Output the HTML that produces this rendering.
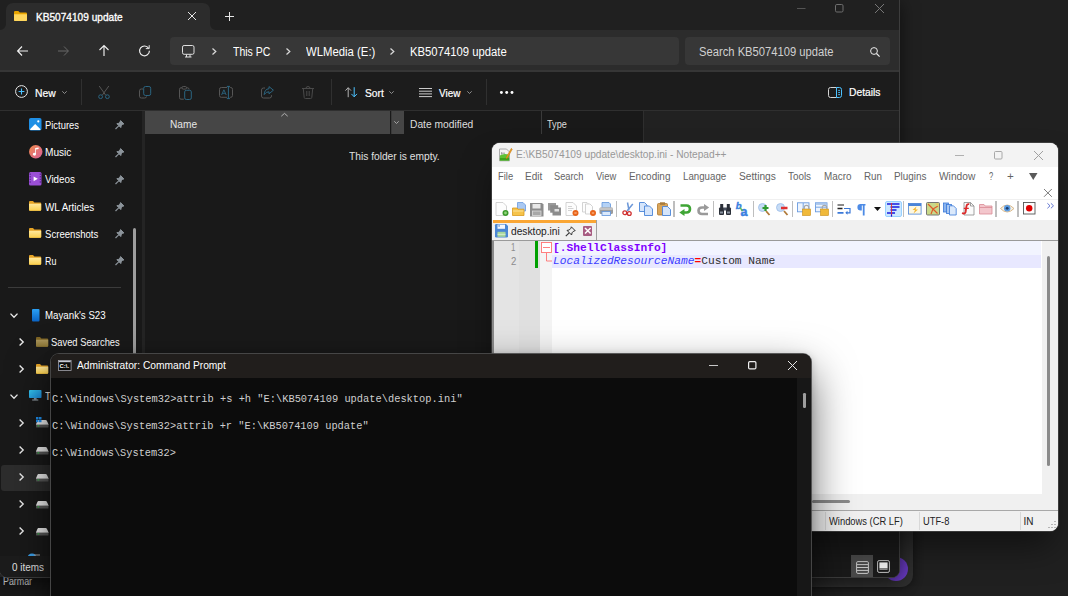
<!DOCTYPE html>
<html lang="en"><head><meta charset="utf-8"><title>KB5074109 update</title>
<style>
*{box-sizing:border-box;margin:0;padding:0}
html,body{width:1068px;height:596px;overflow:hidden;background:#202020}
body{position:relative;font-family:"Liberation Sans",sans-serif}
.a{position:absolute}
.t{position:absolute;white-space:pre;transform-origin:0 50%;display:block}
svg{position:absolute;overflow:visible}
</style></head><body>
<div class="a" style="left:0px;top:0px;width:1068px;height:596px;background:#202020;"></div>
<div class="a" style="left:-20px;top:400px;width:933px;height:186.5px;background:#2f2f2f;border-radius:0 0 12px 12px;box-shadow:0 0 10px rgba(0,0,0,.5)"></div>
<div class="a" style="left:883.5px;top:556.5px;width:24px;height:24px;background:#6a3bc4;border-radius:12px"></div>
<div class="a" style="left:0px;top:577px;width:52px;height:20px;background:#191919;"></div>
<span class="t" id="t0" style="left:3px;top:573px;font-size:11px;color:#e2e2e2;font-family:'Liberation Sans', sans-serif;line-height:16px;transform:scaleX(0.8056);">Parmar</span>
<div class="a" style="left:-1px;top:-1px;width:901px;height:578.5px;background:#191919;border:1px solid #3d3d3d;border-radius:0 0 8px 8px;overflow:hidden;box-shadow:0 4px 18px rgba(0,0,0,.55)">
<div class="a" style="left:0px;top:0px;width:900px;height:30px;background:#202020;"></div>
<div class="a" style="left:0px;top:30px;width:900px;height:40px;background:#2c2c2c;"></div>
<div class="a" style="left:0px;top:70px;width:900px;height:1.5px;background:#363636;"></div>
<div class="a" style="left:0px;top:71.5px;width:900px;height:38.5px;background:#1c1c1c;"></div>
<div class="a" style="left:0px;top:110px;width:900px;height:1px;background:#2f2f2f;"></div>
<div class="a" style="left:6px;top:3px;width:203.5px;height:28px;background:#2c2c2c;border-radius:7px 7px 0 0"></div>
<svg style="left:0px;top:24px" width="6" height="6" viewBox="0 0 6 6"><path d="M0 6 H6 V0 A6 6 0 0 1 0 6Z" fill="#2c2c2c"/></svg>
<svg style="left:209.5px;top:24px" width="6" height="6" viewBox="0 0 6 6"><path d="M0 0 A6 6 0 0 0 6 6 H0Z" fill="#2c2c2c"/></svg>
<svg style="left:14px;top:11px" width="13" height="10" viewBox="0 0 13 10"><path d="M0 1.2 Q0 0 1.2 0 H4.3 L5.8 1.5 H11.8 Q13 1.5 13 2.7 V9 Q13 10 12 10 H1 Q0 10 0 9Z" fill="#e8a400"/><path d="M0 3.2 H13 V9 Q13 10 12 10 H1 Q0 10 0 9Z" fill="#ffd75e"/></svg>
<span class="t" id="t1" style="left:36.3px;top:8.5px;font-size:10.5px;color:#fff;font-family:'Liberation Sans', sans-serif;line-height:16px;transform:scaleX(0.9633);-webkit-text-stroke:.32px;">KB5074109 update</span>
<svg style="left:187.5px;top:12px" width="8" height="8" viewBox="0 0 8 8"><path d="M0 0 L8 8 M8 0 L0 8" stroke="#e6e6e6" stroke-width="1" fill="none"/></svg>
<svg style="left:224.5px;top:11.5px" width="9" height="9" viewBox="0 0 9 9"><path d="M4.5 0 V9 M0 4.5 H9" stroke="#e6e6e6" stroke-width="1" fill="none"/></svg>
<svg style="left:796.5px;top:8px" width="8.5" height="1" viewBox="0 0 8.5 1"><path d="M0 .5 H8.5" stroke="#545454" stroke-width="1"/></svg>
<svg style="left:835px;top:4px" width="8.5" height="8.5" viewBox="0 0 8.5 8.5"><rect x=".5" y=".5" width="7.5" height="7.5" rx="1.3" stroke="#6f6f6f" fill="none"/></svg>
<svg style="left:875px;top:4px" width="9" height="9" viewBox="0 0 9 9"><path d="M0 0 L9 9 M9 0 L0 9" stroke="#777" stroke-width="1" fill="none"/></svg>
<svg style="left:17px;top:45.5px" width="11" height="10" viewBox="0 0 11 10"><path d="M11 5 H.8 M5 .5 L.6 5 L5 9.5" stroke="#f0f0f0" stroke-width="1.15" fill="none"/></svg>
<svg style="left:58px;top:45.5px" width="11" height="10" viewBox="0 0 11 10"><path d="M0 5 H10.2 M6 .5 L10.4 5 L6 9.5" stroke="#686868" stroke-width="1" fill="none"/></svg>
<svg style="left:98.5px;top:45px" width="10" height="11" viewBox="0 0 10 11"><path d="M5 11 V.8 M.5 5 L5 .6 L9.5 5" stroke="#f0f0f0" stroke-width="1.15" fill="none"/></svg>
<svg style="left:139px;top:45px" width="11" height="11" viewBox="0 0 11 11"><path d="M9.6 3.2 A4.9 4.9 0 1 0 10.4 5.8" stroke="#f0f0f0" stroke-width="1.15" fill="none"/><path d="M10.2 .2 V3.6 H6.8" stroke="#e4e4e4" stroke-width="1" fill="none"/></svg>
<div class="a" style="left:170px;top:37px;width:508.5px;height:28px;background:#373737;border-radius:4px"></div>
<svg style="left:182px;top:44.5px" width="12.5" height="12.5" viewBox="0 0 12.5 12.5"><rect x=".5" y=".5" width="11.5" height="8.8" rx="1.6" stroke="#e0e0e0" fill="none"/><path d="M3 12 H9.5 M4.5 9.5 V12 M8 9.5 V12" stroke="#e0e0e0" stroke-width="1" fill="none"/></svg>
<svg style="left:211.5px;top:48px" width="4.5" height="7" viewBox="0 0 4.5 7"><path d="M.5 .5 L3.8 3.5 L.5 6.5" stroke="#d8d8d8" stroke-width="1.25" fill="none"/></svg>
<svg style="left:286px;top:48px" width="4.5" height="7" viewBox="0 0 4.5 7"><path d="M.5 .5 L3.8 3.5 L.5 6.5" stroke="#d8d8d8" stroke-width="1.25" fill="none"/></svg>
<svg style="left:390px;top:48px" width="4.5" height="7" viewBox="0 0 4.5 7"><path d="M.5 .5 L3.8 3.5 L.5 6.5" stroke="#d8d8d8" stroke-width="1.25" fill="none"/></svg>
<span class="t" id="t2" style="left:233.3px;top:43.6px;font-size:12px;color:#fff;font-family:'Liberation Sans', sans-serif;line-height:16px;transform:scaleX(0.8767);">This PC</span>
<span class="t" id="t3" style="left:306px;top:43.6px;font-size:12px;color:#fff;font-family:'Liberation Sans', sans-serif;line-height:16px;transform:scaleX(0.9452);">WLMedia (E:)</span>
<span class="t" id="t4" style="left:410px;top:43.6px;font-size:12px;color:#fff;font-family:'Liberation Sans', sans-serif;line-height:16px;transform:scaleX(0.9417);">KB5074109 update</span>
<div class="a" style="left:685px;top:37px;width:205px;height:28px;background:#373737;border-radius:4px"></div>
<span class="t" id="t5" style="left:698.5px;top:43.6px;font-size:12px;color:#d0d0d0;font-family:'Liberation Sans', sans-serif;line-height:16px;transform:scaleX(0.9340);">Search KB5074109 update</span>
<svg style="left:869.5px;top:46.5px" width="10" height="10" viewBox="0 0 10 10"><circle cx="4" cy="4" r="3.4" stroke="#ececec" stroke-width="1" fill="none"/><path d="M6.5 6.5 L9.6 9.6" stroke="#ececec" stroke-width="1.15"/></svg>
<svg style="left:14.5px;top:85px" width="13" height="13" viewBox="0 0 13 13"><circle cx="6.5" cy="6.5" r="5.9" stroke="#e8e8e8" stroke-width="1" fill="none"/><path d="M6.5 3.6 V9.4 M3.6 6.5 H9.4" stroke="#4cc2ff" stroke-width="1.1"/></svg>
<span class="t" id="t6" style="left:35.3px;top:84.5px;font-size:10.5px;color:#fff;font-family:'Liberation Sans', sans-serif;line-height:16px;transform:scaleX(0.9857);-webkit-text-stroke:.2px;">New</span>
<svg style="left:61.5px;top:91px" width="5" height="3" viewBox="0 0 5 3"><path d="M.3 .3 L2.5 2.5 L4.7 .3" stroke="#9a9a9a" stroke-width=".9" fill="none"/></svg>
<div class="a" style="left:81px;top:79px;width:1px;height:26px;background:#303030;"></div>
<svg style="left:97.5px;top:86px" width="12" height="13" viewBox="0 0 12 13"><path d="M1.2 0 L7.6 9 M10.8 0 L4.4 9" stroke="#565656" stroke-width="1" fill="none"/><circle cx="2.6" cy="10.7" r="1.9" stroke="#2b6581" fill="none"/><circle cx="9.4" cy="10.7" r="1.9" stroke="#2b6581" fill="none"/></svg>
<svg style="left:138.5px;top:86px" width="12.5" height="12.5" viewBox="0 0 12.5 12.5"><path d="M4 3 H2.3 Q.5 3 .5 4.8 V10.2 Q.5 12 2.3 12 H5.7 Q7.5 12 7.5 10.4" stroke="#565656" fill="none"/><rect x="4.7" y=".5" width="7" height="9" rx="1.8" stroke="#2b6581" fill="none"/></svg>
<svg style="left:179px;top:85.5px" width="13" height="14" viewBox="0 0 13 14"><path d="M3 1.8 H2 Q.5 1.8 .5 3.3 V11.7 Q.5 13.2 2 13.2 H4.8 M7.5 1.8 H8.5 Q10 1.8 10 3.3 V3.5" stroke="#565656" fill="none"/><rect x="3" y=".5" width="4.5" height="2.6" rx="1.2" stroke="#565656" fill="none"/><rect x="5.7" y="4.3" width="6.6" height="9.2" rx="1.6" stroke="#2b6581" fill="none"/></svg>
<svg style="left:219px;top:85.5px" width="14" height="13" viewBox="0 0 14 13"><path d="M8 1.5 H2.3 Q.5 1.5 .5 3.3 V9.5 Q.5 11.3 2.3 11.3 H8 M10.8 1.5 H11.7 Q13.5 1.5 13.5 3.3 V9.5 Q13.5 11.3 11.7 11.3 H10.8" stroke="#565656" fill="none"/><path d="M9.4 0 V13 M7.8 .4 H11 M7.8 12.6 H11" stroke="#2b6581" fill="none"/><path d="M2.6 9 L4.9 3.8 L7.2 9 M3.4 7.3 H6.4" stroke="#2b6581" stroke-width=".9" fill="none"/></svg>
<svg style="left:260.5px;top:85.5px" width="13" height="12.5" viewBox="0 0 13 12.5"><path d="M4 2 H2.5 Q.5 2 .5 4 V10 Q.5 12 2.5 12 H8.5 Q10.5 12 10.5 10 V9.2" stroke="#565656" fill="none"/><path d="M8 .6 L12.4 4.2 L8 7.8 V5.8 Q5 5.6 3.2 8.6 Q3.4 3.2 8 2.7Z" stroke="#2b6581" fill="none" stroke-linejoin="round"/></svg>
<svg style="left:302px;top:85.5px" width="12" height="13" viewBox="0 0 12 13"><path d="M0 2.5 H12 M4 2.3 Q4 .5 6 .5 Q8 .5 8 2.3 M1.3 2.8 L2.2 11.5 Q2.3 12.5 3.4 12.5 H8.6 Q9.7 12.5 9.8 11.5 L10.7 2.8 M4.8 5 V10 M7.2 5 V10" stroke="#4a4a4a" fill="none"/></svg>
<div class="a" style="left:330.5px;top:79px;width:1px;height:26px;background:#303030;"></div>
<svg style="left:344.5px;top:87px" width="13" height="10.4" viewBox="0 0 13 10.4"><path d="M3.2 10.2 V.8 M.4 3.6 L3.2 .7 L6 3.6" stroke="#b4b4b4" stroke-width="1" fill="none"/><path d="M9.2 .2 V9.8 M6.4 6.9 L9.2 9.8 L12 6.9" stroke="#4cc2ff" stroke-width="1" fill="none"/></svg>
<span class="t" id="t7" style="left:364.5px;top:84.5px;font-size:10.5px;color:#fff;font-family:'Liberation Sans', sans-serif;line-height:16px;transform:scaleX(0.9737);-webkit-text-stroke:.2px;">Sort</span>
<svg style="left:389px;top:91px" width="5" height="3" viewBox="0 0 5 3"><path d="M.3 .3 L2.5 2.5 L4.7 .3" stroke="#9a9a9a" stroke-width=".9" fill="none"/></svg>
<svg style="left:418.5px;top:87.5px" width="13" height="9" viewBox="0 0 13 9"><path d="M0 .5 H13 M0 3.2 H13 M0 5.9 H13 M0 8.6 H13" stroke="#e0e0e0" stroke-width=".9"/></svg>
<span class="t" id="t8" style="left:439.3px;top:84.5px;font-size:10.5px;color:#fff;font-family:'Liberation Sans', sans-serif;line-height:16px;transform:scaleX(0.9435);-webkit-text-stroke:.2px;">View</span>
<svg style="left:466.5px;top:91px" width="5" height="3" viewBox="0 0 5 3"><path d="M.3 .3 L2.5 2.5 L4.7 .3" stroke="#9a9a9a" stroke-width=".9" fill="none"/></svg>
<div class="a" style="left:486px;top:79px;width:1px;height:26px;background:#303030;"></div>
<svg style="left:500px;top:91.2px" width="13.5" height="3" viewBox="0 0 13.5 3"><circle cx="1.4" cy="1.5" r="1.45" fill="#fff"/><circle cx="6.7" cy="1.5" r="1.45" fill="#fff"/><circle cx="12" cy="1.5" r="1.45" fill="#fff"/></svg>
<svg style="left:828px;top:86.5px" width="14" height="11" viewBox="0 0 14 11"><path d="M8.5 .5 H2.5 Q.5 .5 .5 2.5 V8.5 Q.5 10.5 2.5 10.5 H8.5" stroke="#d4d4d4" fill="none"/><path d="M8.5 .5 H11.5 Q13.5 .5 13.5 2.5 V8.5 Q13.5 10.5 11.5 10.5 H8.5Z" stroke="#4cc2ff" fill="none"/><path d="M10.2 3.4 H12 M10.2 5.5 H12 M10.2 7.6 H12" stroke="#4cc2ff" stroke-width=".9"/></svg>
<span class="t" id="t9" style="left:848.6px;top:84.1px;font-size:10.5px;color:#fff;font-family:'Liberation Sans', sans-serif;line-height:16px;transform:scaleX(0.9812);-webkit-text-stroke:.2px;">Details</span>
<div class="a" style="left:142px;top:111px;width:2.6px;height:470px;background:#242424;"></div>
<div class="a" style="left:644px;top:111px;width:256px;height:470px;background:#212121;"></div>
<div class="a" style="left:643px;top:111px;width:1px;height:470px;background:#2e2e2e;"></div>
<div class="a" style="left:644px;top:500px;width:256px;height:80px;background:#1a1a1a;"></div>
<div class="a" style="left:144.8px;top:111px;width:245.7px;height:23.3px;background:#464646;"></div>
<div class="a" style="left:391px;top:111px;width:12.5px;height:23.3px;background:#464646;"></div>
<div class="a" style="left:390.5px;top:111px;width:0.6px;height:23.3px;background:#3a3a3a;"></div>
<svg style="left:393.7px;top:120.5px" width="5" height="3" viewBox="0 0 5 3"><path d="M.3 .3 L2.5 2.5 L4.7 .3" stroke="#b0b0b0" stroke-width=".9" fill="none"/></svg>
<svg style="left:280.5px;top:112.5px" width="7" height="3.5" viewBox="0 0 7 3.5"><path d="M.3 3.2 L3.5 .4 L6.7 3.2" stroke="#bdbdbd" stroke-width=".9" fill="none"/></svg>
<span class="t" id="t10" style="left:170px;top:115.5px;font-size:10.5px;color:#e6e6e6;font-family:'Liberation Sans', sans-serif;line-height:16px;transform:scaleX(0.9643);">Name</span>
<span class="t" id="t11" style="left:409.5px;top:115.5px;font-size:10.5px;color:#dedede;font-family:'Liberation Sans', sans-serif;line-height:16px;transform:scaleX(0.9769);">Date modified</span>
<div class="a" style="left:541px;top:111px;width:1px;height:23px;background:#3a3a3a;"></div>
<span class="t" id="t12" style="left:547px;top:115.5px;font-size:10.5px;color:#dedede;font-family:'Liberation Sans', sans-serif;line-height:16px;transform:scaleX(0.8696);">Type</span>
<span class="t" id="t13" style="left:348.5px;top:147.5px;font-size:10.5px;color:#e0e0e0;font-family:'Liberation Sans', sans-serif;line-height:16px;transform:scaleX(0.9731);">This folder is empty.</span>
<svg width="0" height="0" style="left:0;top:0"><defs><linearGradient id="fg" x1="0" y1="0" x2="0" y2="1"><stop offset="0" stop-color="#ffe89c"/><stop offset="1" stop-color="#fbd04e"/></linearGradient><linearGradient id="fgd" x1="0" y1="0" x2="0" y2="1"><stop offset="0" stop-color="#a8945a"/><stop offset="1" stop-color="#8a7434"/></linearGradient></defs></svg>
<svg style="left:29px;top:118.2px" width="12.5" height="12.5" viewBox="0 0 12.5 12.5"><rect width="12.5" height="12.5" rx="1.8" fill="#1f8fe5"/><path d="M1 11.3 L6.2 6 L11.5 11.3 Q11.5 12 10.8 12 H1.8 Q1 12 1 11.3Z" fill="#fff"/><circle cx="9.3" cy="3.4" r="1.1" fill="#fff"/></svg>
<span class="t" id="t14" style="left:45px;top:117.1px;font-size:10.5px;color:#fff;font-family:'Liberation Sans', sans-serif;line-height:16px;transform:scaleX(0.8947);">Pictures</span>
<svg style="left:115px;top:120.4px" width="9.5" height="9.5" viewBox="0 0 9.5 9.5"><path d="M5.6 .6 L8.9 3.9 L7.4 4.5 L6.2 5.7 L5.8 7.6 L1.9 3.7 L3.8 3.3 L5 2.1Z" fill="#8b939a" stroke="#8b939a" stroke-width="1" stroke-linejoin="round"/><path d="M3.7 5.8 L.5 9" stroke="#8b939a" stroke-width="1.2"/></svg>
<svg style="left:28.5px;top:145.2px" width="13.5" height="13.5" viewBox="0 0 13.5 13.5"><defs><linearGradient id="mg" x1="0" y1="0" x2="1" y2="1"><stop offset="0" stop-color="#f08a4b"/><stop offset="1" stop-color="#d8609a"/></linearGradient></defs><circle cx="6.75" cy="6.75" r="6.75" fill="url(#mg)"/><path d="M6.2 3 L9.6 2.4 V4 L7 4.5 V9.3 A1.6 1.4 0 1 1 6.2 8Z" fill="#fff"/></svg>
<span class="t" id="t15" style="left:45px;top:144.3px;font-size:10.5px;color:#fff;font-family:'Liberation Sans', sans-serif;line-height:16px;transform:scaleX(0.9630);">Music</span>
<svg style="left:115px;top:147.6px" width="9.5" height="9.5" viewBox="0 0 9.5 9.5"><path d="M5.6 .6 L8.9 3.9 L7.4 4.5 L6.2 5.7 L5.8 7.6 L1.9 3.7 L3.8 3.3 L5 2.1Z" fill="#8b939a" stroke="#8b939a" stroke-width="1" stroke-linejoin="round"/><path d="M3.7 5.8 L.5 9" stroke="#8b939a" stroke-width="1.2"/></svg>
<svg style="left:29px;top:172.2px" width="12.5" height="13.5" viewBox="0 0 12.5 13.5"><rect width="12.5" height="13.5" rx="1.5" fill="#9b4fd6"/><path d="M1.2 1.5 V12 M11.3 1.5 V12" stroke="#5d2a94" stroke-width="1.2" stroke-dasharray="1.4 1.2"/><path d="M4.6 4.4 L8.8 6.8 L4.6 9.2Z" fill="#fff"/></svg>
<span class="t" id="t16" style="left:45px;top:171.4px;font-size:10.5px;color:#fff;font-family:'Liberation Sans', sans-serif;line-height:16px;transform:scaleX(0.9375);">Videos</span>
<svg style="left:115px;top:174.7px" width="9.5" height="9.5" viewBox="0 0 9.5 9.5"><path d="M5.6 .6 L8.9 3.9 L7.4 4.5 L6.2 5.7 L5.8 7.6 L1.9 3.7 L3.8 3.3 L5 2.1Z" fill="#8b939a" stroke="#8b939a" stroke-width="1" stroke-linejoin="round"/><path d="M3.7 5.8 L.5 9" stroke="#8b939a" stroke-width="1.2"/></svg>
<svg style="left:29px;top:201px" width="12.2" height="9.7" viewBox="0 0 12.2 9.7"><path d="M0 1 Q0 0 1 0 H4 L5.4 1.4 H11.2 Q12.2 1.4 12.2 2.4 V8.7 Q12.2 9.7 11.2 9.7 H1 Q0 9.7 0 8.7Z" fill="#e6a324"/><path d="M0 2.8 H12.2 V8.7 Q12.2 9.7 11.2 9.7 H1 Q0 9.7 0 8.7Z" fill="url(#fg)"/></svg>
<span class="t" id="t17" style="left:45px;top:198.6px;font-size:10.5px;color:#fff;font-family:'Liberation Sans', sans-serif;line-height:16px;transform:scaleX(0.9423);">WL Articles</span>
<svg style="left:115px;top:201.9px" width="9.5" height="9.5" viewBox="0 0 9.5 9.5"><path d="M5.6 .6 L8.9 3.9 L7.4 4.5 L6.2 5.7 L5.8 7.6 L1.9 3.7 L3.8 3.3 L5 2.1Z" fill="#8b939a" stroke="#8b939a" stroke-width="1" stroke-linejoin="round"/><path d="M3.7 5.8 L.5 9" stroke="#8b939a" stroke-width="1.2"/></svg>
<svg style="left:29px;top:228.2px" width="12.2" height="9.7" viewBox="0 0 12.2 9.7"><path d="M0 1 Q0 0 1 0 H4 L5.4 1.4 H11.2 Q12.2 1.4 12.2 2.4 V8.7 Q12.2 9.7 11.2 9.7 H1 Q0 9.7 0 8.7Z" fill="#e6a324"/><path d="M0 2.8 H12.2 V8.7 Q12.2 9.7 11.2 9.7 H1 Q0 9.7 0 8.7Z" fill="url(#fg)"/></svg>
<span class="t" id="t18" style="left:45px;top:225.7px;font-size:10.5px;color:#fff;font-family:'Liberation Sans', sans-serif;line-height:16px;transform:scaleX(0.9138);">Screenshots</span>
<svg style="left:115px;top:229px" width="9.5" height="9.5" viewBox="0 0 9.5 9.5"><path d="M5.6 .6 L8.9 3.9 L7.4 4.5 L6.2 5.7 L5.8 7.6 L1.9 3.7 L3.8 3.3 L5 2.1Z" fill="#8b939a" stroke="#8b939a" stroke-width="1" stroke-linejoin="round"/><path d="M3.7 5.8 L.5 9" stroke="#8b939a" stroke-width="1.2"/></svg>
<svg style="left:29px;top:255.4px" width="12.2" height="9.7" viewBox="0 0 12.2 9.7"><path d="M0 1 Q0 0 1 0 H4 L5.4 1.4 H11.2 Q12.2 1.4 12.2 2.4 V8.7 Q12.2 9.7 11.2 9.7 H1 Q0 9.7 0 8.7Z" fill="#e6a324"/><path d="M0 2.8 H12.2 V8.7 Q12.2 9.7 11.2 9.7 H1 Q0 9.7 0 8.7Z" fill="url(#fg)"/></svg>
<span class="t" id="t19" style="left:45px;top:252.8px;font-size:10.5px;color:#fff;font-family:'Liberation Sans', sans-serif;line-height:16px;transform:scaleX(0.8462);">Ru</span>
<svg style="left:115px;top:256.1px" width="9.5" height="9.5" viewBox="0 0 9.5 9.5"><path d="M5.6 .6 L8.9 3.9 L7.4 4.5 L6.2 5.7 L5.8 7.6 L1.9 3.7 L3.8 3.3 L5 2.1Z" fill="#8b939a" stroke="#8b939a" stroke-width="1" stroke-linejoin="round"/><path d="M3.7 5.8 L.5 9" stroke="#8b939a" stroke-width="1.2"/></svg>
<div class="a" style="left:133px;top:228px;width:2.5px;height:130px;background:#9d9d9d;border-radius:1.5px"></div>
<div class="a" style="left:8px;top:287.3px;width:112.5px;height:1px;background:#3b3b3b;"></div>
<svg style="left:10px;top:313px" width="8" height="5" viewBox="0 0 8 5"><path d="M.5 .6 L4 4.2 L7.5 .6" stroke="#ececec" stroke-width="1.35" fill="none"/></svg>
<svg style="left:31.5px;top:308.5px" width="7.5" height="12.5" viewBox="0 0 7.5 12.5"><defs><linearGradient id="ph" x1="0" y1="0" x2="0" y2="1"><stop offset="0" stop-color="#2aa0f4"/><stop offset="1" stop-color="#0a63c4"/></linearGradient></defs><rect width="7.5" height="12.5" rx="1" fill="url(#ph)"/></svg>
<span class="t" id="t20" style="left:45px;top:307px;font-size:10.5px;color:#fff;font-family:'Liberation Sans', sans-serif;line-height:16px;transform:scaleX(0.9242);">Mayank's S23</span>
<svg style="left:18.5px;top:338px" width="5" height="8" viewBox="0 0 5 8"><path d="M.6 .5 L4.2 4 L.6 7.5" stroke="#ececec" stroke-width="1.35" fill="none"/></svg>
<svg style="left:35.5px;top:337px" width="12.2" height="9.7" viewBox="0 0 12.2 9.7"><path d="M0 1 Q0 0 1 0 H4 L5.4 1.4 H11.2 Q12.2 1.4 12.2 2.4 V8.7 Q12.2 9.7 11.2 9.7 H1 Q0 9.7 0 8.7Z" fill="#7e6424"/><path d="M0 2.8 H12.2 V8.7 Q12.2 9.7 11.2 9.7 H1 Q0 9.7 0 8.7Z" fill="url(#fgd)"/></svg>
<span class="t" id="t21" style="left:51.3px;top:334px;font-size:10.5px;color:#fff;font-family:'Liberation Sans', sans-serif;line-height:16px;transform:scaleX(0.8922);">Saved Searches</span>
<svg style="left:18.5px;top:365px" width="5" height="8" viewBox="0 0 5 8"><path d="M.6 .5 L4.2 4 L.6 7.5" stroke="#ececec" stroke-width="1.35" fill="none"/></svg>
<svg style="left:35.5px;top:364px" width="12.2" height="9.7" viewBox="0 0 12.2 9.7"><path d="M0 1 Q0 0 1 0 H4 L5.4 1.4 H11.2 Q12.2 1.4 12.2 2.4 V8.7 Q12.2 9.7 11.2 9.7 H1 Q0 9.7 0 8.7Z" fill="#e6a324"/><path d="M0 2.8 H12.2 V8.7 Q12.2 9.7 11.2 9.7 H1 Q0 9.7 0 8.7Z" fill="url(#fg)"/></svg>
<svg style="left:10px;top:394px" width="8" height="5" viewBox="0 0 8 5"><path d="M.5 .6 L4 4.2 L7.5 .6" stroke="#ececec" stroke-width="1.35" fill="none"/></svg>
<svg style="left:29px;top:390.3px" width="12.5" height="11" viewBox="0 0 12.5 11"><defs><linearGradient id="pc" x1="0" y1="0" x2="1" y2="1"><stop offset="0" stop-color="#35c8f0"/><stop offset="1" stop-color="#1a86d8"/></linearGradient></defs><rect x="0" y="0" width="12.5" height="8" rx=".8" fill="url(#pc)"/><path d="M4.9 8 H7.6 V9.6 H4.9Z" fill="#7e8e99"/><path d="M3.2 10 H9.3" stroke="#aab6be" stroke-width=".9"/></svg>
<span class="t" id="t22" style="left:45px;top:388px;font-size:10.5px;color:#fff;font-family:'Liberation Sans', sans-serif;line-height:16px;transform:scaleX(0.8919);">This PC</span>
<svg style="left:18.5px;top:419px" width="5" height="8" viewBox="0 0 5 8"><path d="M.6 .5 L4.2 4 L.6 7.5" stroke="#ececec" stroke-width="1.35" fill="none"/></svg>
<svg style="left:35.5px;top:419.8px" width="12.5" height="7.6" viewBox="0 0 12.5 7.6"><path d="M2.4 0 H9.6 Q10.6 0 11 .9 L12.5 4.2 H0 L1.4 .9 Q1.8 0 2.4 0Z" fill="#ececec"/><rect x="0" y="4" width="12.5" height="3.6" rx=".7" fill="#585858"/><rect x="0" y="4" width="12.5" height=".8" fill="#c4c4c4"/><rect x="1.5" y="5.4" width="1.7" height="1" fill="#27c93f"/><path d="M0 -3 H2.5 V-.6 H0Z M3 -3 H5.5 V-.6 H3Z M0 -.1 H2.5 V2.3 H0Z M3 -.1 H5.5 V2.3 H3Z" fill="#1e90f0"/></svg>
<svg style="left:18.5px;top:446px" width="5" height="8" viewBox="0 0 5 8"><path d="M.6 .5 L4.2 4 L.6 7.5" stroke="#ececec" stroke-width="1.35" fill="none"/></svg>
<svg style="left:35.5px;top:446.8px" width="12.5" height="7.6" viewBox="0 0 12.5 7.6"><path d="M2.4 0 H9.6 Q10.6 0 11 .9 L12.5 4.2 H0 L1.4 .9 Q1.8 0 2.4 0Z" fill="#ececec"/><rect x="0" y="4" width="12.5" height="3.6" rx=".7" fill="#585858"/><rect x="0" y="4" width="12.5" height=".8" fill="#c4c4c4"/><rect x="1.5" y="5.4" width="1.7" height="1" fill="#27c93f"/></svg>
<div class="a" style="left:1px;top:464.5px;width:141px;height:26px;background:#2d2d2d;border-radius:3px"></div>
<svg style="left:18.5px;top:473px" width="5" height="8" viewBox="0 0 5 8"><path d="M.6 .5 L4.2 4 L.6 7.5" stroke="#ececec" stroke-width="1.35" fill="none"/></svg>
<svg style="left:35.5px;top:473.8px" width="12.5" height="7.6" viewBox="0 0 12.5 7.6"><path d="M2.4 0 H9.6 Q10.6 0 11 .9 L12.5 4.2 H0 L1.4 .9 Q1.8 0 2.4 0Z" fill="#ececec"/><rect x="0" y="4" width="12.5" height="3.6" rx=".7" fill="#585858"/><rect x="0" y="4" width="12.5" height=".8" fill="#c4c4c4"/><rect x="1.5" y="5.4" width="1.7" height="1" fill="#27c93f"/></svg>
<svg style="left:18.5px;top:500px" width="5" height="8" viewBox="0 0 5 8"><path d="M.6 .5 L4.2 4 L.6 7.5" stroke="#ececec" stroke-width="1.35" fill="none"/></svg>
<svg style="left:35.5px;top:500.8px" width="12.5" height="7.6" viewBox="0 0 12.5 7.6"><path d="M2.4 0 H9.6 Q10.6 0 11 .9 L12.5 4.2 H0 L1.4 .9 Q1.8 0 2.4 0Z" fill="#ececec"/><rect x="0" y="4" width="12.5" height="3.6" rx=".7" fill="#585858"/><rect x="0" y="4" width="12.5" height=".8" fill="#c4c4c4"/><rect x="1.5" y="5.4" width="1.7" height="1" fill="#27c93f"/></svg>
<svg style="left:18.5px;top:527px" width="5" height="8" viewBox="0 0 5 8"><path d="M.6 .5 L4.2 4 L.6 7.5" stroke="#ececec" stroke-width="1.35" fill="none"/></svg>
<svg style="left:35.5px;top:527.8px" width="12.5" height="7.6" viewBox="0 0 12.5 7.6"><path d="M2.4 0 H9.6 Q10.6 0 11 .9 L12.5 4.2 H0 L1.4 .9 Q1.8 0 2.4 0Z" fill="#ececec"/><rect x="0" y="4" width="12.5" height="3.6" rx=".7" fill="#585858"/><rect x="0" y="4" width="12.5" height=".8" fill="#c4c4c4"/><rect x="1.5" y="5.4" width="1.7" height="1" fill="#27c93f"/></svg>
<svg style="left:27px;top:553px" width="12" height="6" viewBox="0 0 12 6"><circle cx="5" cy="5" r="4.6" fill="#3a9ee8"/><path d="M7 2 H13" stroke="#aaa" stroke-width="1"/></svg>
<div class="a" style="left:11px;top:556px;width:2px;height:1.5px;background:#888;"></div>
<div class="a" style="left:0px;top:556px;width:51px;height:22px;background:#1c1c1c;"></div>
<span class="t" id="t23" style="left:12px;top:559px;font-size:10.5px;color:#e4e4e4;font-family:'Liberation Sans', sans-serif;line-height:16px;transform:scaleX(0.9412);">0 items</span>
<div class="a" style="left:851px;top:555px;width:22px;height:23px;background:#4b4b4b;"></div>
<svg style="left:856px;top:560.5px" width="13" height="13" viewBox="0 0 13 13"><rect x=".6" y=".6" width="11.8" height="11.8" rx="1.2" stroke="#cdcdcd" stroke-width="1" fill="none"/><path d="M1 3.6 H12 M1 6.5 H12 M1 9.4 H12" stroke="#cdcdcd" stroke-width="1"/></svg>
<svg style="left:877px;top:559.5px" width="13" height="13" viewBox="0 0 13 13"><rect x=".6" y=".6" width="11.8" height="11.8" rx="1.5" stroke="#c4c4c4" stroke-width="1" fill="none"/><rect x="2.4" y="2.4" width="8.2" height="6" fill="#f2f2f2"/><rect x="2.4" y="8.4" width="8.2" height="1.6" fill="#8a8a8a"/></svg>
</div>
<div class="a" style="left:492px;top:143px;width:566px;height:387.5px;background:#fff;border-radius:8px;overflow:hidden;box-shadow:0 0 0 1px rgba(90,90,90,.55),0 20px 34px -6px rgba(0,0,0,.5)">
<div class="a" style="left:0px;top:0px;width:566px;height:24.3px;background:#f3f3f3;"></div>
<svg style="left:6.5px;top:4.5px" width="13.5" height="13.5" viewBox="0 0 13.5 13.5"><path d="M.5 1 H7.5 L10.5 4 V12.8 H.5Z" fill="#f4f4f4" stroke="#9a9a9a" stroke-width=".8"/><path d="M.9 7.5 Q4 5 10.1 6.5 V12.4 H.9Z" fill="#5ec236"/><path d="M.9 10 H10.1 V12.4 H.9Z" fill="#3da31c"/><path d="M12.3 .3 L13.3 1.2 L8.3 10.2 L7 10.8 L7.2 9.3Z" fill="#f0a020" stroke="#b06a10" stroke-width=".4"/><path d="M2.5 6.5 V4.2 M3 5.2 H6" stroke="#777" stroke-width=".7"/></svg>
<span class="t" id="t24" style="left:24.3px;top:4px;font-size:10px;color:#989898;font-family:'Liberation Sans', sans-serif;line-height:16px;transform:scaleX(1.0179);">E:\KB5074109 update\desktop.ini - Notepad++</span>
<svg style="left:463px;top:12px" width="9" height="1" viewBox="0 0 9 1"><path d="M0 .5 H9" stroke="#b0b0b0"/></svg>
<svg style="left:502px;top:7.5px" width="8.5" height="8.5" viewBox="0 0 8.5 8.5"><rect x=".5" y=".5" width="7.5" height="7.5" rx="1" stroke="#a8a8a8" fill="none"/></svg>
<svg style="left:541.5px;top:7.5px" width="9" height="9" viewBox="0 0 9 9"><path d="M0 0 L9 9 M9 0 L0 9" stroke="#a0a0a0" stroke-width="1" fill="none"/></svg>
<span class="t" id="t25" style="left:6px;top:25.6px;font-size:10px;color:#646464;font-family:'Liberation Sans', sans-serif;line-height:16px;transform:scaleX(0.9375);">File</span>
<span class="t" id="t26" style="left:33px;top:25.6px;font-size:10px;color:#646464;font-family:'Liberation Sans', sans-serif;line-height:16px;transform:scaleX(1.0000);">Edit</span>
<span class="t" id="t27" style="left:62.3px;top:25.6px;font-size:10px;color:#646464;font-family:'Liberation Sans', sans-serif;line-height:16px;transform:scaleX(0.9281);">Search</span>
<span class="t" id="t28" style="left:104.3px;top:25.6px;font-size:10px;color:#646464;font-family:'Liberation Sans', sans-serif;line-height:16px;transform:scaleX(0.9409);">View</span>
<span class="t" id="t29" style="left:137.3px;top:25.6px;font-size:10px;color:#646464;font-family:'Liberation Sans', sans-serif;line-height:16px;transform:scaleX(0.9929);">Encoding</span>
<span class="t" id="t30" style="left:191.3px;top:25.6px;font-size:10px;color:#646464;font-family:'Liberation Sans', sans-serif;line-height:16px;transform:scaleX(0.9711);">Language</span>
<span class="t" id="t31" style="left:247.3px;top:25.6px;font-size:10px;color:#646464;font-family:'Liberation Sans', sans-serif;line-height:16px;transform:scaleX(1.0194);">Settings</span>
<span class="t" id="t32" style="left:296.3px;top:25.6px;font-size:10px;color:#646464;font-family:'Liberation Sans', sans-serif;line-height:16px;transform:scaleX(0.9870);">Tools</span>
<span class="t" id="t33" style="left:332.3px;top:25.6px;font-size:10px;color:#646464;font-family:'Liberation Sans', sans-serif;line-height:16px;transform:scaleX(0.9893);">Macro</span>
<span class="t" id="t34" style="left:372.3px;top:25.6px;font-size:10px;color:#646464;font-family:'Liberation Sans', sans-serif;line-height:16px;transform:scaleX(0.9833);">Run</span>
<span class="t" id="t35" style="left:402.3px;top:25.6px;font-size:10px;color:#646464;font-family:'Liberation Sans', sans-serif;line-height:16px;transform:scaleX(0.9909);">Plugins</span>
<span class="t" id="t36" style="left:447.3px;top:25.6px;font-size:10px;color:#646464;font-family:'Liberation Sans', sans-serif;line-height:16px;transform:scaleX(1.0194);">Window</span>
<span class="t" id="t37" style="left:496.5px;top:25.6px;font-size:10px;color:#646464;font-family:'Liberation Sans', sans-serif;line-height:16px;transform:scaleX(0.7500);">?</span>
<span class="t" id="t38" style="left:515px;top:25.6px;font-size:10px;color:#646464;font-family:'Liberation Sans', sans-serif;line-height:16px;transform:scaleX(1.1667);">+</span>
<svg style="left:537px;top:29.5px" width="8.5" height="7" viewBox="0 0 8.5 7"><path d="M0 0 H8.5 L4.25 7Z" fill="#5a5a5a"/></svg>
<svg style="left:552px;top:45.5px" width="7.8" height="7.8" viewBox="0 0 7.8 7.8"><path d="M0 0 L7.8 7.8 M7.8 0 L0 7.8" stroke="#7a7a7a" stroke-width="1" fill="none"/></svg>
<div class="a" style="left:0px;top:56px;width:566px;height:1px;background:#f0f0f0;"></div>
<svg style="left:3px;top:59px" width="14" height="14" viewBox="0 0 14 14"><path d="M1 .5 H8 L11.5 4 V13.5 H1Z" fill="#fdfdfd" stroke="#c8c8c8" stroke-width=".8"/><circle cx="10.5" cy="11" r="3" fill="#3c9a2c"/><circle cx="10.5" cy="11" r="1.4" fill="#8fd67a"/></svg>
<svg style="left:19.5px;top:59px" width="15" height="14" viewBox="0 0 15 14"><path d="M5.5 .5 H11 L13.5 3 V9 H5.5Z" fill="#a9c8f2" stroke="#6a9be0" stroke-width=".8"/><path d="M.5 6 H5 L6 7.2 H12 V13.5 H.5Z" fill="#f6c34a" stroke="#d99a20" stroke-width=".8"/><path d="M1 9 H11.5" stroke="#fbe29a" stroke-width="1"/></svg>
<svg style="left:37.5px;top:59.5px" width="13.5" height="13.5" viewBox="0 0 13.5 13.5"><path d="M0 0 H12 L13.5 1.5 V13.5 H0Z" fill="#8c8c8c"/><rect x="2.5" y="1" width="8" height="4.5" fill="#e8e8e8"/><rect x="2.5" y="8" width="8.5" height="4.5" fill="#a8a8a8" stroke="#dcdcdc" stroke-width=".8"/></svg>
<svg style="left:55.5px;top:60px" width="13" height="12.5" viewBox="0 0 13 12.5"><rect x="0" y="0" width="8" height="7.5" fill="#9a9a9a"/><rect x="2.2" y="2.2" width="8" height="7.5" fill="#8a8a8a"/><rect x="4.5" y="4.5" width="8.5" height="8" fill="#8c8c8c"/><rect x="6.5" y="6" width="4.5" height="2.5" fill="#e0e0e0"/></svg>
<svg style="left:73px;top:59px" width="14" height="14" viewBox="0 0 14 14"><path d="M1 .5 H8 L11.5 4 V13.5 H1Z" fill="#fdfdfd" stroke="#c8c8c8" stroke-width=".8"/><path d="M3 4.5 H7 M3 6.5 H8.5 M3 8.5 H7" stroke="#c8c8c8" stroke-width=".8"/><circle cx="10.5" cy="11" r="3" fill="#e8641a"/><path d="M9.3 11 H11.7" stroke="#ffc9a0" stroke-width="1"/></svg>
<svg style="left:90px;top:59px" width="15" height="14" viewBox="0 0 15 14"><path d="M.5 .5 H5 L7.5 3 V10 H.5Z" fill="#fdfdfd" stroke="#c8c8c8" stroke-width=".8"/><path d="M3.5 2 H8 L10.5 4.5 V12 H3.5Z" fill="#fdfdfd" stroke="#c8c8c8" stroke-width=".8"/><circle cx="11" cy="11" r="3" fill="#e8641a"/><path d="M9.8 11 H12.2" stroke="#ffc9a0" stroke-width="1"/></svg>
<svg style="left:107px;top:59px" width="14.5" height="14" viewBox="0 0 14.5 14"><path d="M3 .5 H10 L11.5 2 V6 H3Z" fill="#b5d2f5" stroke="#5f94dc" stroke-width=".8"/><rect x=".5" y="5.5" width="13.5" height="6.5" rx="1.5" fill="#9c9c9c"/><rect x=".5" y="5.5" width="13.5" height="2.4" rx="1.2" fill="#c4c4c4"/><rect x="3" y="9.5" width="8.5" height="4" fill="#dbe9fb" stroke="#5f94dc" stroke-width=".8"/></svg>
<div class="a" style="left:124.2px;top:58px;width:1.2px;height:15.5px;background:#bebebe;"></div>
<svg style="left:130px;top:59px" width="13" height="14" viewBox="0 0 13 14"><path d="M5.5 .5 L7 8.5 M10.8 2 L5 9" stroke="#6d98d8" stroke-width="1.5" fill="none"/><circle cx="2.8" cy="10.8" r="1.9" stroke="#d03030" stroke-width="1.3" fill="none"/><circle cx="7.3" cy="11.5" r="1.9" stroke="#d03030" stroke-width="1.3" fill="none"/></svg>
<svg style="left:147px;top:59px" width="14.5" height="14" viewBox="0 0 14.5 14"><path d="M.5 .5 H5.5 L8 3 V9.5 H.5Z" fill="#d5e5fb" stroke="#4a84d8" stroke-width=".9"/><path d="M5.5 4 H10.5 L13.5 7 V13.5 H5.5Z" fill="#d5e5fb" stroke="#4a84d8" stroke-width=".9"/></svg>
<svg style="left:164.5px;top:59px" width="14.5" height="14" viewBox="0 0 14.5 14"><rect x=".5" y="1.5" width="10" height="11.5" rx="1" fill="#d9a55a" stroke="#b07830" stroke-width=".8"/><rect x="3" y=".3" width="5" height="2.5" fill="#a87a3a"/><path d="M5.5 4.5 H10.5 L13.5 7.5 V13.5 H5.5Z" fill="#d5e5fb" stroke="#4a84d8" stroke-width=".9"/></svg>
<div class="a" style="left:181.4px;top:58px;width:1.2px;height:15.5px;background:#bebebe;"></div>
<svg style="left:187px;top:60.5px" width="12.5" height="11.5" viewBox="0 0 12.5 11.5"><path d="M1.5 1.5 H7.5 Q11 1.5 11 5 Q11 8.5 7.5 8.5 H4.5" stroke="#3fa535" stroke-width="2.6" fill="none"/><path d="M5.5 5 L0.3 8.5 L5.5 12Z" fill="#3fa535"/></svg>
<svg style="left:204.5px;top:60.5px" width="12.5" height="11.5" viewBox="0 0 12.5 11.5"><path d="M11 10 H5 Q1.5 10 1.5 6.5 Q1.5 3.5 5 3.5 H8" stroke="#9a9a9a" stroke-width="2.6" fill="none"/><path d="M7 0 L12.2 3.5 L7 7Z" fill="#9a9a9a"/></svg>
<div class="a" style="left:221.2px;top:58px;width:1.2px;height:15.5px;background:#bebebe;"></div>
<svg style="left:227px;top:61px" width="12" height="11" viewBox="0 0 12 11"><rect x="0" y="3.5" width="5" height="7.5" rx="1" fill="#2a2f38"/><rect x="7" y="3.5" width="5" height="7.5" rx="1" fill="#2a2f38"/><rect x="1.2" y="0" width="3" height="4" fill="#2a2f38"/><rect x="7.8" y="0" width="3" height="4" fill="#2a2f38"/><rect x="4.5" y="3.5" width="3" height="3" fill="#4a5260"/><rect x="1" y="7.5" width="3" height="2" fill="#8a93a0"/><rect x="8" y="7.5" width="3" height="2" fill="#8a93a0"/></svg>
<svg style="left:243px;top:59px" width="14" height="14" viewBox="0 0 14 14"><text x=".8" y="7.3" font-family="Liberation Sans, sans-serif" font-weight="bold" font-style="italic" font-size="9.5" fill="#3a80e0" stroke="#3a80e0" stroke-width=".4">b</text><text x="5.6" y="13.8" font-family="Liberation Sans, sans-serif" font-weight="bold" font-size="12.5" fill="#3a80e0" stroke="#3a80e0" stroke-width=".5">a</text><path d="M5 5.5 L7.5 9" stroke="#5cb85c" stroke-width="1.3" fill="none"/></svg>
<div class="a" style="left:260.7px;top:58px;width:1.2px;height:15.5px;background:#bebebe;"></div>
<svg style="left:266px;top:59.5px" width="13" height="13" viewBox="0 0 13 13"><circle cx="4.5" cy="4.5" r="4" fill="#c6dcf6" stroke="#9cbde8" stroke-width=".8"/><path d="M8 8 L11.5 12" stroke="#b07a3a" stroke-width="1.8"/><path d="M7.5 2 V8 M4.5 5 H10.5" stroke="#2f9a2f" stroke-width="2.2"/></svg>
<svg style="left:284px;top:59.5px" width="13" height="13" viewBox="0 0 13 13"><circle cx="4.5" cy="4.5" r="4" fill="#c6dcf6" stroke="#9cbde8" stroke-width=".8"/><path d="M8 8 L11.5 12" stroke="#b07a3a" stroke-width="1.8"/><path d="M5 5 H11.5" stroke="#e03030" stroke-width="2.4"/></svg>
<div class="a" style="left:300.2px;top:58px;width:1.2px;height:15.5px;background:#bebebe;"></div>
<svg style="left:305px;top:59px" width="14" height="14" viewBox="0 0 14 14"><rect x=".5" y=".8" width="11.5" height="9" fill="#eef5fe" stroke="#6a9be0" stroke-width=".9"/><path d="M6.2 1 V9.5" stroke="#6a9be0" stroke-width=".9"/><rect x="5.5" y="7" width="8" height="6.5" fill="#f0b93a" stroke="#c98c14" stroke-width=".6"/><path d="M7.3 7 V5.3 Q7.3 3.3 9.5 3.3 Q11.7 3.3 11.7 5.3 V7" stroke="#a8a8a8" stroke-width="1.2" fill="none"/></svg>
<svg style="left:323px;top:59px" width="14" height="14" viewBox="0 0 14 14"><rect x=".5" y=".8" width="11.5" height="9" fill="#eef5fe" stroke="#6a9be0" stroke-width=".9"/><path d="M.5 5.2 H12" stroke="#6a9be0" stroke-width=".9"/><path d="M.5 2 H12" stroke="#9cbde8" stroke-width="1.4"/><rect x="5.5" y="7" width="8" height="6.5" fill="#f0b93a" stroke="#c98c14" stroke-width=".6"/><path d="M7.3 7 V5.3 Q7.3 3.3 9.5 3.3 Q11.7 3.3 11.7 5.3 V7" stroke="#a8a8a8" stroke-width="1.2" fill="none"/></svg>
<div class="a" style="left:339.9px;top:58px;width:1.2px;height:15.5px;background:#bebebe;"></div>
<svg style="left:344.5px;top:60.5px" width="14" height="11" viewBox="0 0 14 11"><path d="M.5 1 H7" stroke="#8a8a8a" stroke-width="1.8"/><path d="M.5 4.5 H5.5" stroke="#222" stroke-width="1.4"/><path d="M.5 8.8 H6.5" stroke="#3a78d8" stroke-width="1.8"/><path d="M7 4.5 H13 V8.8 H9.5" stroke="#3a78d8" stroke-width="1.2" fill="none"/><path d="M10.5 6.8 L8.3 8.8 L10.5 10.8Z" fill="#3a78d8"/></svg>
<svg style="left:364.5px;top:60.5px" width="8.5" height="11.5" viewBox="0 0 8.5 11.5"><path d="M3.6 0 H8.5 V1.6 H7.6 V11.5 H5.8 V1.6 H4.8 V6.4 H3.6 A3.2 3.2 0 0 1 3.6 0Z" fill="#4d8be6"/></svg>
<svg style="left:381.5px;top:63.5px" width="7" height="4" viewBox="0 0 7 4"><path d="M0 0 H7 L3.5 4Z" fill="#111"/></svg>
<div class="a" style="left:392.5px;top:57.8px;width:17.8px;height:16.5px;background:#cce8ff;border:1px solid #99d1ff;border-radius:2px"></div>
<svg style="left:395px;top:59.5px" width="13" height="13.5" viewBox="0 0 13 13.5"><path d="M0 1 H12.5 M3.5 4 H12.5 M3.5 7 H9.5 M0 10 H8" stroke="#1a1ae0" stroke-width="1.7"/><path d="M4.5 0 V13.5" stroke="#e03030" stroke-width=".9"/><path d="M4.5 11.5 V13.5" stroke="#1a1ae0" stroke-width="1.2"/></svg>
<div class="a" style="left:411.2px;top:58px;width:1.2px;height:15.5px;background:#bebebe;"></div>
<svg style="left:416px;top:59.7px" width="13.5" height="11.5" viewBox="0 0 13.5 11.5"><rect x=".4" y=".4" width="12.7" height="10.7" fill="#fdf7e0" stroke="#4a84d8" stroke-width=".8"/><rect x=".4" y=".4" width="12.7" height="2.6" fill="#4a84d8"/><path d="M8.5 3.5 L4.5 7 H7 L5.5 10.5 L10 6.5 H7.5Z" fill="#f2b632"/></svg>
<svg style="left:433.5px;top:58.7px" width="14" height="13.5" viewBox="0 0 14 13.5"><rect x=".5" y=".5" width="13" height="12.5" rx="1" fill="#c9d98a" stroke="#6a6a6a" stroke-width=".9"/><path d="M2 2 L7 7 L5 12 M7 7 L12 4 M7 7 L11.5 11.5" stroke="#e05a2a" stroke-width="1.2" fill="none"/><path d="M9 1.5 H12.5 V5" fill="#e8c85a"/></svg>
<svg style="left:451px;top:58.7px" width="14" height="13.5" viewBox="0 0 14 13.5"><rect x=".5" y="1" width="5" height="9" fill="#8ab4ee" stroke="#3a78d8" stroke-width=".8"/><rect x="3.5" y="2.5" width="5" height="9" fill="#a9c8f2" stroke="#3a78d8" stroke-width=".8"/><path d="M6.5 3.8 H10.5 L13.2 6.5 V13 H6.5Z" fill="#dbe9fb" stroke="#3a78d8" stroke-width=".8"/></svg>
<svg style="left:469px;top:58.7px" width="13.5" height="13.5" viewBox="0 0 13.5 13.5"><path d="M3 .5 H9.5 L13 4 V13 H3Z" fill="#fbfbfb" stroke="#8a8a8a" stroke-width=".8"/><path d="M9.5 .5 V4 H13" stroke="#8a8a8a" stroke-width=".8" fill="none"/><path d="M8.3 2.2 Q5.8 1.6 5.4 4.6 L4.6 10 Q4.2 12.2 1 11.2" stroke="#dc2a2a" stroke-width="1.8" fill="none"/><path d="M2.8 6.4 H7.8" stroke="#dc2a2a" stroke-width="1.4"/></svg>
<svg style="left:487px;top:60.7px" width="13.5" height="10.5" viewBox="0 0 13.5 10.5"><path d="M.5 .5 H5 L6.2 2 H13 V10 H.5Z" fill="#f3c6cc" stroke="#d98a94" stroke-width=".8"/><path d="M.5 3.5 H13" stroke="#d98a94" stroke-width=".8"/></svg>
<div class="a" style="left:503.4px;top:58px;width:1.2px;height:15.5px;background:#bebebe;"></div>
<svg style="left:508px;top:59.7px" width="14.5" height="11" viewBox="0 0 14.5 11"><path d="M.5 5.5 Q7.2 -1.5 14 5.5 Q7.2 12.5 .5 5.5Z" fill="#f7f2e6" stroke="#d9b88a" stroke-width="1"/><circle cx="7.2" cy="5.3" r="3.2" fill="#5a9ae0"/><circle cx="7.2" cy="5.3" r="1.4" fill="#1a3a6a"/></svg>
<div class="a" style="left:525.4px;top:58px;width:1.2px;height:15.5px;background:#bebebe;"></div>
<svg style="left:531px;top:59.2px" width="12.5" height="12.5" viewBox="0 0 12.5 12.5"><rect x=".5" y=".5" width="11.5" height="11.5" fill="#fdfdfd" stroke="#555" stroke-width=".9"/><circle cx="6.2" cy="6.2" r="3.2" fill="#e00000"/></svg>
<svg style="left:555.3px;top:60.2px" width="7" height="5.6" viewBox="0 0 7 5.6"><path d="M.4 .3 L3 2.8 L.4 5.3 M3.9 .3 L6.5 2.8 L3.9 5.3" stroke="#5268cc" stroke-width=".9" fill="none"/></svg>
<div class="a" style="left:0px;top:76.5px;width:566px;height:21px;background:#f0f0f0;"></div>
<div class="a" style="left:1px;top:76.5px;width:103.5px;height:3px;background:#faa634;"></div>
<div class="a" style="left:104.3px;top:76.5px;width:1px;height:21px;background:#a0a0a0;"></div>
<svg style="left:2.5px;top:81px" width="13" height="13.5" viewBox="0 0 13 13.5"><path d="M0 1.2 Q0 0 1.2 0 H11 L13 2 V12.3 Q13 13.5 11.8 13.5 H1.2 Q0 13.5 0 12.3Z" fill="#4a86d4"/><rect x="2.5" y=".6" width="7.5" height="4.2" fill="#f2f6fc"/><rect x="3.5" y="1.2" width="1.2" height="1.5" fill="#4a86d4"/><rect x="2.5" y="7.8" width="8" height="5" fill="#a8d69a"/><rect x="2.5" y="9.8" width="8" height="1" fill="#d8eed0"/></svg>
<span class="t" id="t39" style="left:19px;top:81px;font-size:10px;color:#222;font-family:'Liberation Sans', sans-serif;line-height:16px;transform:scaleX(1.0208);">desktop.ini</span>
<svg style="left:73px;top:82.5px" width="11" height="11" viewBox="0 0 11 11"><path d="M6.3 .8 L10.2 4.7 L8.8 5 L7 6.8 L6.6 9 L2 4.4 L4.2 4 L6 2.2Z" fill="none" stroke="#333" stroke-width="1"/><path d="M4.2 6.8 L.8 10.2" stroke="#333" stroke-width="1.1"/></svg>
<div class="a" style="left:90.5px;top:82.8px;width:9.8px;height:9.8px;background:#a85c82;border-radius:1px"></div>
<svg style="left:92.6px;top:84.9px" width="5.6" height="5.6" viewBox="0 0 5.6 5.6"><path d="M0 0 L5.6 5.6 M5.6 0 L0 5.6" stroke="#fff" stroke-width="1.5"/></svg>
<div class="a" style="left:0px;top:97px;width:566px;height:1px;background:#9a9a9a;"></div>
<div class="a" style="left:0px;top:98px;width:1.5px;height:253px;background:#8a8a8a;"></div>
<div class="a" style="left:1.5px;top:98px;width:25.5px;height:253px;background:#e4e4e4;"></div>
<div class="a" style="left:27px;top:98px;width:21px;height:253px;background:#e0e0e0;"></div>
<div class="a" style="left:48px;top:98px;width:12.3px;height:253px;background:#f4f4f4;"></div>
<div class="a" style="left:43.2px;top:98px;width:3px;height:27px;background:#00a000;"></div>
<div class="a" style="left:60.3px;top:98px;width:489px;height:13.5px;background:#f2f4ff;"></div>
<div class="a" style="left:60.3px;top:111.5px;width:489px;height:13.5px;background:#e8e8ff;"></div>
<span class="t" id="t40" style="left:19px;top:96.3px;font-size:10.5px;color:#8c8c8c;font-family:'Liberation Sans', sans-serif;line-height:16px;transform:scaleX(0.7500);">1</span>
<span class="t" id="t41" style="left:19px;top:109.8px;font-size:10.5px;color:#8c8c8c;font-family:'Liberation Sans', sans-serif;line-height:16px;transform:scaleX(0.9167);">2</span>
<svg style="left:49px;top:98.8px" width="11" height="20" viewBox="0 0 11 20"><rect x=".5" y=".5" width="10" height="10" fill="#fff" stroke="#ff7272" stroke-width=".9"/><path d="M2 5.5 H9" stroke="#ff7272" stroke-width=".9"/><path d="M5.5 11 V19 H11" stroke="#ff7272" stroke-width=".9" fill="none"/></svg>
<span class="t" id="t42" style="left:60.8px;top:96.5px;font-size:11.2px;color:#8000ff;font-family:'Liberation Mono',monospace;line-height:16px;transform:scaleX(1.0018);font-weight:bold;">[.ShellClassInfo]</span>
<span class="t" id="t43" style="left:60.8px;top:110px;font-size:11.2px;color:#303030;font-family:'Liberation Mono',monospace;line-height:16px;transform:scaleX(1.0032);"><i style="color:#3c3cff">LocalizedResourceName</i><b style="color:#ff0000">=</b>Custom Name</span>
<div class="a" style="left:549.5px;top:98px;width:16.5px;height:253px;background:#f0f0f0;"></div>
<div class="a" style="left:555px;top:113px;width:2.5px;height:210px;background:#8a8a8a;border-radius:1.5px"></div>
<div class="a" style="left:0px;top:351px;width:566px;height:16.5px;background:#f0f0f0;"></div>
<div class="a" style="left:320px;top:356.5px;width:38px;height:3px;background:#8a8a8a;border-radius:1.5px"></div>
<div class="a" style="left:0px;top:367.5px;width:566px;height:20.5px;background:#f0f0f0;"></div>
<div class="a" style="left:0px;top:367px;width:566px;height:1px;background:#a8a8a8;"></div>
<div class="a" style="left:333px;top:369px;width:1px;height:18px;background:#d8d8d8;"></div>
<div class="a" style="left:427px;top:369px;width:1px;height:18px;background:#d8d8d8;"></div>
<div class="a" style="left:527.5px;top:369px;width:1px;height:18px;background:#d8d8d8;"></div>
<span class="t" id="t44" style="left:337px;top:371px;font-size:10px;color:#222;font-family:'Liberation Sans', sans-serif;line-height:16px;transform:scaleX(0.9367);">Windows (CR LF)</span>
<span class="t" id="t45" style="left:430.5px;top:371px;font-size:10px;color:#222;font-family:'Liberation Sans', sans-serif;line-height:16px;transform:scaleX(0.9286);">UTF-8</span>
<span class="t" id="t46" style="left:531.5px;top:371px;font-size:10px;color:#222;font-family:'Liberation Sans', sans-serif;line-height:16px;transform:scaleX(1.0000);">IN</span>
<svg style="left:555px;top:377px" width="9" height="9" viewBox="0 0 9 9"><path d="M8 1 V2 M8 4 V5 M5 4 V5 M8 7 V8 M5 7 V8 M2 7 V8" stroke="#9a9a9a" stroke-width="1.4"/></svg>
</div>
<div class="a" style="left:51px;top:354px;width:760.3px;height:260px;background:#0c0c0c;border-radius:8px 8px 0 0;overflow:hidden;box-shadow:0 0 0 1px rgba(75,75,75,.9),0 18px 44px rgba(0,0,0,.6),0 2px 10px rgba(0,0,0,.22)">
<div class="a" style="left:0px;top:0px;width:761.5px;height:24px;background:#211e1c;"></div>
<svg style="left:6.5px;top:6px" width="13.5" height="10.8" viewBox="0 0 13.5 10.8"><rect x=".4" y=".4" width="12.7" height="10" fill="#0c0c0c" stroke="#a4a4ac" stroke-width=".8"/><rect x=".8" y=".8" width="11.9" height="1.4" fill="#c4c8d4"/><text x="1.6" y="8.4" font-family="Liberation Sans" font-weight="bold" font-size="6" fill="#fff" textLength="9.5" lengthAdjust="spacingAndGlyphs">C:\.</text></svg>
<span class="t" id="t47" style="left:25.5px;top:3px;font-size:10.5px;color:#fff;font-family:'Liberation Sans', sans-serif;line-height:16px;transform:scaleX(0.9739);">Administrator: Command Prompt</span>
<svg style="left:658px;top:11px" width="9" height="1" viewBox="0 0 9 1"><path d="M0 .5 H9" stroke="#c8c8c8"/></svg>
<svg style="left:697px;top:7px" width="8.5" height="8.5" viewBox="0 0 8.5 8.5"><rect x=".6" y=".6" width="7.3" height="7.3" rx="1.2" stroke="#f0f0f0" stroke-width="1.2" fill="none"/></svg>
<svg style="left:737px;top:7px" width="9" height="9" viewBox="0 0 9 9"><path d="M0 0 L9 9 M9 0 L0 9" stroke="#e8e8e8" stroke-width="1" fill="none"/></svg>
<div class="a" style="left:746px;top:24px;width:14.3px;height:240px;background:#171717;"></div>
<div class="a" style="left:752.2px;top:39px;width:2.6px;height:15px;background:#9d9d9d;border-radius:1.3px"></div>
<span class="t" id="t48" style="left:0.8px;top:36.5px;font-size:11.3px;color:#cfcfcf;font-family:'Liberation Mono',monospace;line-height:16px;transform:scaleX(0.9177);">C:\Windows\System32&gt;attrib +s +h "E:\KB5074109 update\desktop.ini"</span>
<span class="t" id="t49" style="left:0.8px;top:63.5px;font-size:11.3px;color:#cfcfcf;font-family:'Liberation Mono',monospace;line-height:16px;transform:scaleX(0.9159);">C:\Windows\System32&gt;attrib +r "E:\KB5074109 update"</span>
<span class="t" id="t50" style="left:0.8px;top:90.5px;font-size:11.3px;color:#cfcfcf;font-family:'Liberation Mono',monospace;line-height:16px;transform:scaleX(0.9132);">C:\Windows\System32&gt;</span>
</div>
</body></html>
